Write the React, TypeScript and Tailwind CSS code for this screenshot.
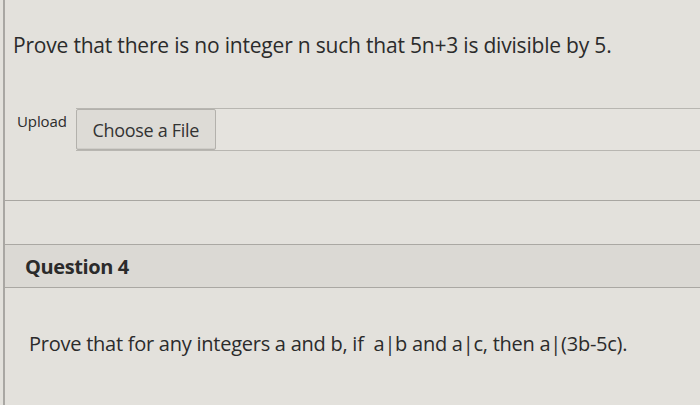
import React from 'react';

const App: React.FC = () => {
  return (
    <div
      className="w-[700px] h-[405px] overflow-hidden bg-[#e3e1dc] text-[#2b2b2b]"
      style={{ fontFamily: '"Open Sans", "Noto Sans", sans-serif' }}
    >
      <div className="h-full ml-[3px] border-l-2 border-[#a9a7a3] flex flex-col">
        <div className="pt-[31px] pl-[8px] pr-4">
          <p className="text-[21px] leading-[28px] tracking-[-0.2px] whitespace-nowrap">
            Prove that there is no integer n such that 5n+3 is divisible by 5.
          </p>
        </div>

        <div className="mt-[49px] flex items-start pl-[12px]">
          <span className="text-[15px] leading-[20px] mt-[3px] tracking-[-0.1px]">Upload</span>
          <div className="ml-[9px] flex-1 flex h-[43px] border-y border-[#b8b6b1]">
            <button className="w-[140px] h-full border border-[#b3b1ac] rounded-[2px] bg-[#dddbd6] text-[18px] text-[#333] tracking-[-0.3px] flex items-center justify-center pt-[2px] shadow-[inset_0_-1px_0_#cfcdc8]">
              Choose a File
            </button>
            <div className="flex-1 bg-[#e5e3de]" />
          </div>
        </div>

        <div className="mt-[49px] border-t border-[#a8a6a1]" />

        <div className="mt-[43px] h-[44px] bg-[#dbd9d4] border-y border-[#aaa8a3] flex items-center pl-[20px]">
          <span className="text-[20px] font-bold tracking-[-0.4px] pt-[1px]">Question 4</span>
        </div>

        <div className="pt-[42px] pl-[24px]">
          <p className="text-[20px] leading-[28px] tracking-[-0.25px] whitespace-nowrap">
            Prove that for any integers a and b, if&nbsp; a|b and a|c, then a|(3b-5c).
          </p>
        </div>
      </div>
    </div>
  );
};

export default App;
